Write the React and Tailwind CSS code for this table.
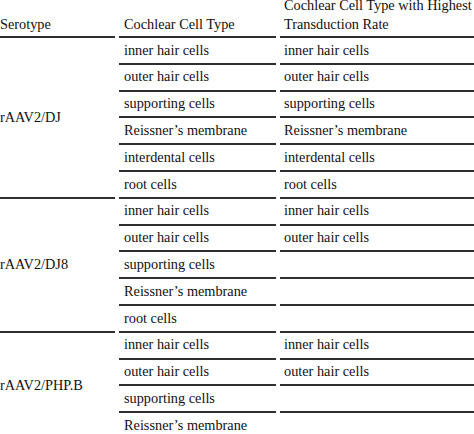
const groups = [
  {
    serotype: "rAAV2/DJ",
    span: "row-span-6",
    rows: [
      ["inner hair cells", "inner hair cells"],
      ["outer hair cells", "outer hair cells"],
      ["supporting cells", "supporting cells"],
      ["Reissner’s membrane", "Reissner’s membrane"],
      ["interdental cells", "interdental cells"],
      ["root cells", "root cells"],
    ],
  },
  {
    serotype: "rAAV2/DJ8",
    span: "row-span-5",
    rows: [
      ["inner hair cells", "inner hair cells"],
      ["outer hair cells", "outer hair cells"],
      ["supporting cells", ""],
      ["Reissner’s membrane", ""],
      ["root cells", ""],
    ],
  },
  {
    serotype: "rAAV2/PHP.B",
    span: "row-span-4",
    rows: [
      ["inner hair cells", "inner hair cells"],
      ["outer hair cells", "outer hair cells"],
      ["supporting cells", ""],
      ["Reissner’s membrane", ""],
    ],
  },
];

const rule = "border-b-2 border-[#2e2e2e]";

export default function App() {
  return (
    <div className="h-[434px] w-[474px] overflow-hidden bg-white font-['Liberation_Serif',serif] text-[14.3px] text-[#111]">
      <div className="grid grid-cols-[115px_157px_194px] grid-rows-[38px_repeat(15,26.8px)] gap-x-1">
        {/* header */}
        <div className={`${rule} flex items-end pb-[3px] leading-[18.5px]`}>Serotype</div>
        <div className={`${rule} flex items-end pb-[3px] pl-[5px] leading-[18.5px]`}>Cochlear Cell Type</div>
        <div className={`${rule} flex items-end pb-[3px] pl-1 leading-[18.5px] whitespace-nowrap`}>
          <span>
            Cochlear Cell Type with Highest
            <br />
            Transduction Rate
          </span>
        </div>

        {groups.map((group) => [
          <div key={`${group.serotype}-s`} className={`${group.span} ${rule} flex items-center`}>
            {group.serotype}
          </div>,
          ...group.rows.flatMap(([cellType, highest], i) => [
            <div key={`${group.serotype}-c-${i}`} className={`${rule} flex items-center pl-[5px]`}>
              {cellType}
            </div>,
            <div key={`${group.serotype}-h-${i}`} className={`${rule} flex items-center pl-1`}>
              {highest}
            </div>,
          ]),
        ])}
      </div>
    </div>
  );
}
